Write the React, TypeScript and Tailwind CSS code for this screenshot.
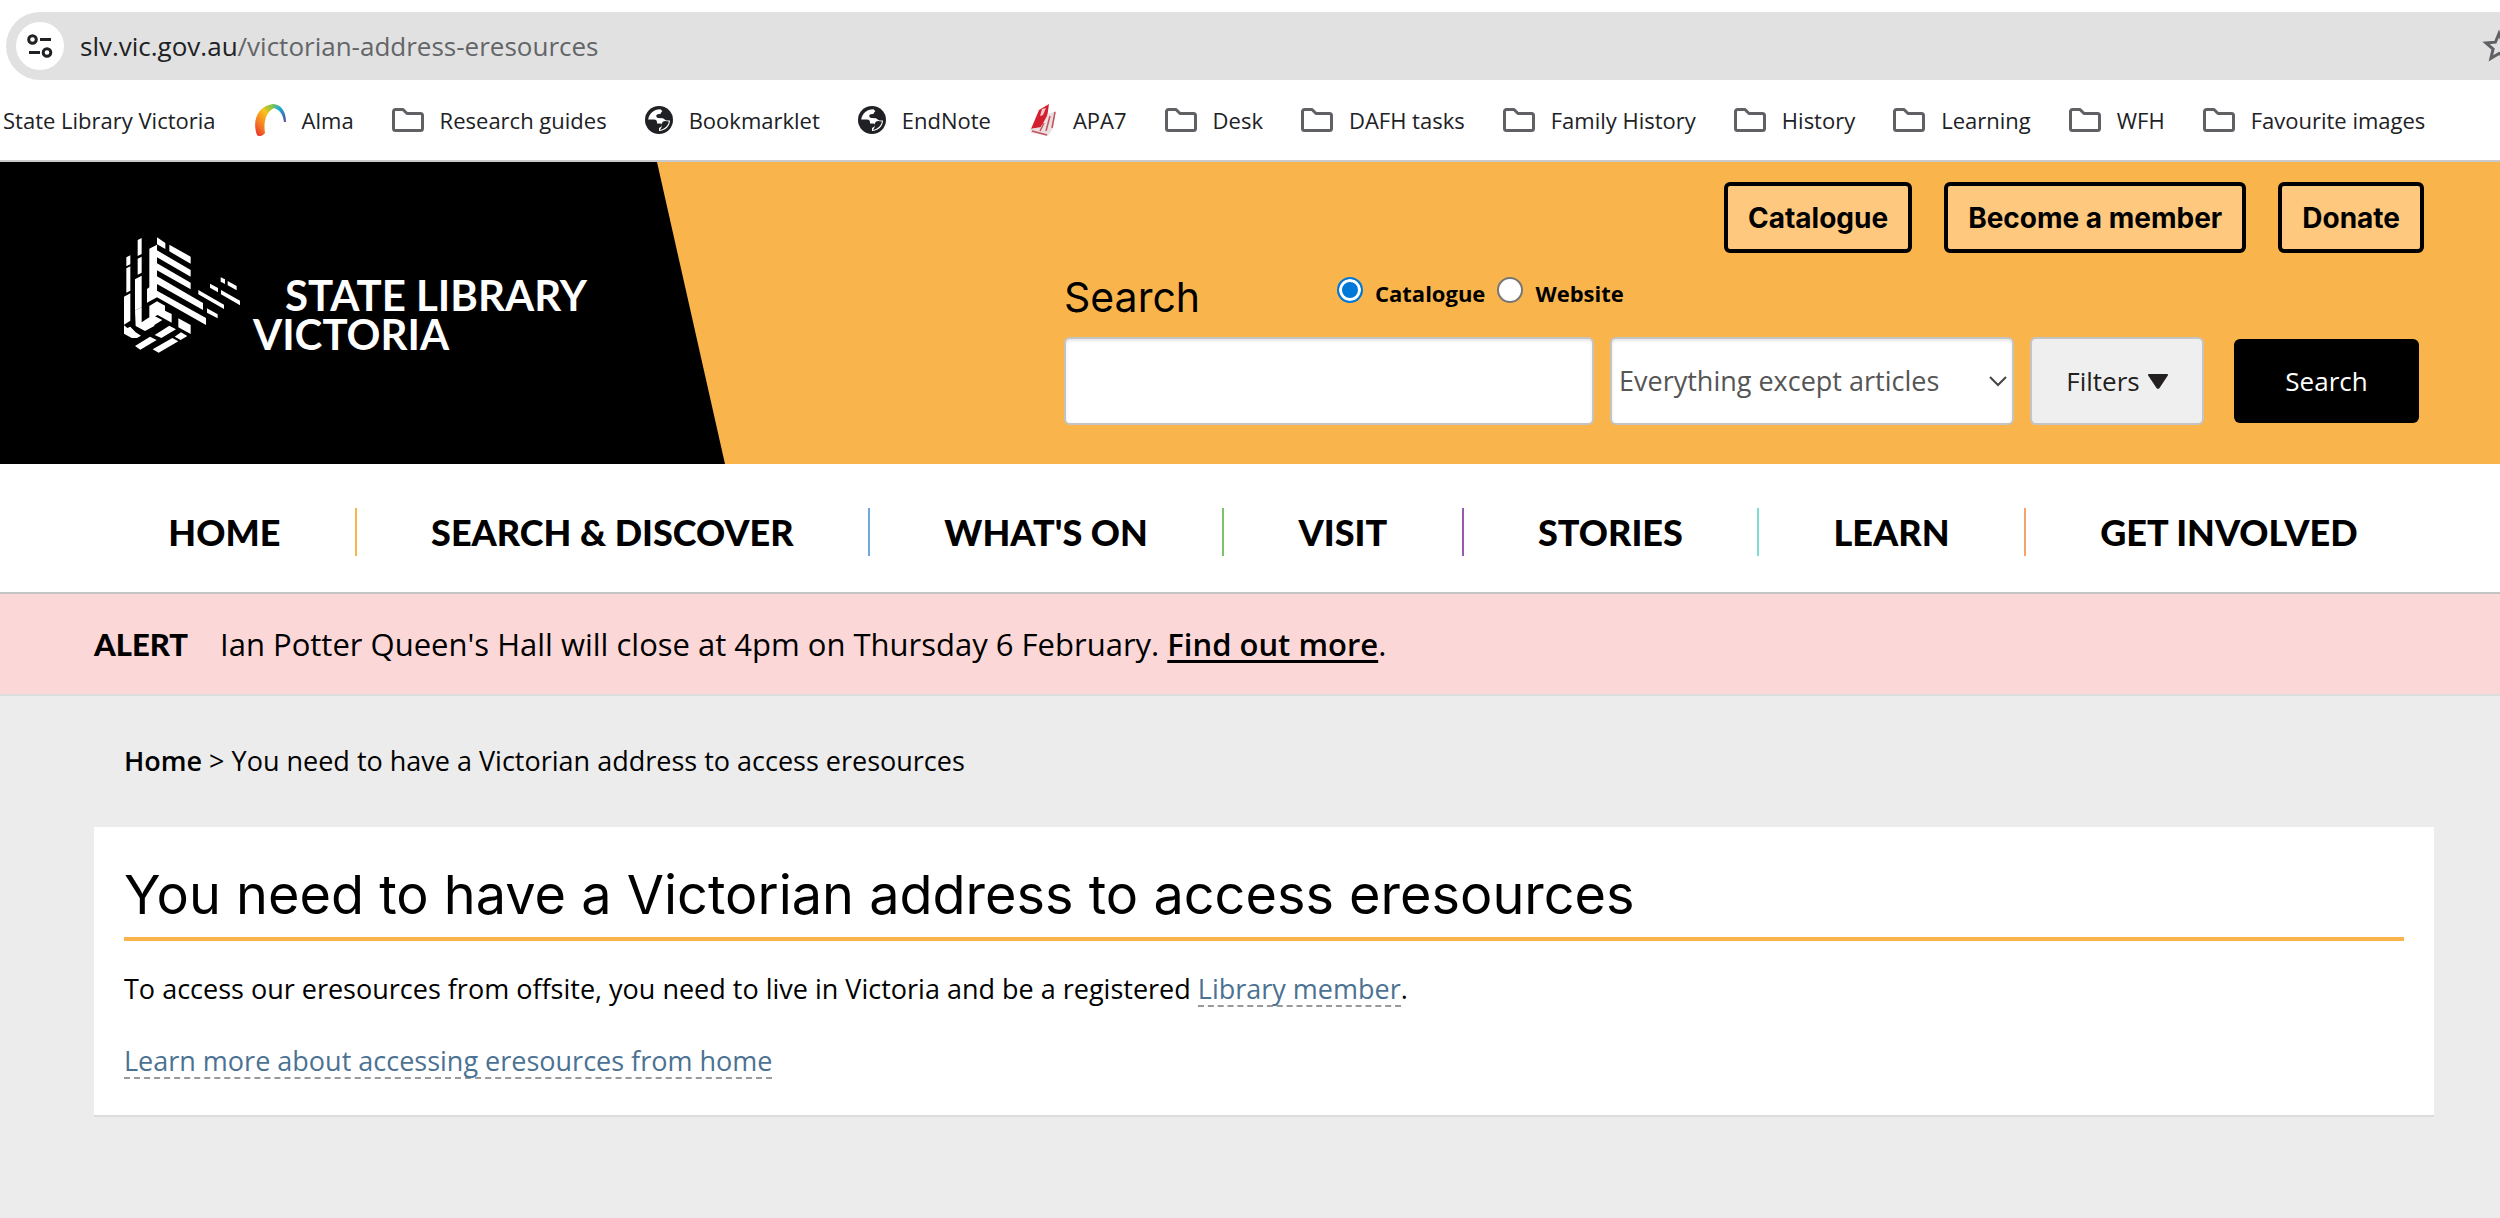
import React, { useState } from 'react';

type IconKind = 'alma' | 'folder' | 'globe' | 'apa';

interface Bookmark {
  label: string;
  icon?: IconKind;
}

const bookmarks: Bookmark[] = [
  { label: 'State Library Victoria' },
  { label: 'Alma', icon: 'alma' },
  { label: 'Research guides', icon: 'folder' },
  { label: 'Bookmarklet', icon: 'globe' },
  { label: 'EndNote', icon: 'globe' },
  { label: 'APA7', icon: 'apa' },
  { label: 'Desk', icon: 'folder' },
  { label: 'DAFH tasks', icon: 'folder' },
  { label: 'Family History', icon: 'folder' },
  { label: 'History', icon: 'folder' },
  { label: 'Learning', icon: 'folder' },
  { label: 'WFH', icon: 'folder' },
  { label: 'Favourite images', icon: 'folder' },
];

const navItems = [
  { label: 'HOME', border: 'border-[#f9b54c]' },
  { label: 'SEARCH & DISCOVER', border: 'border-[#6fa8dc]' },
  { label: "WHAT'S ON", border: 'border-[#7cc36a]' },
  { label: 'VISIT', border: 'border-[#9b59b0]' },
  { label: 'STORIES', border: 'border-[#7fdcd0]' },
  { label: 'LEARN', border: 'border-[#f5a26b]' },
  { label: 'GET INVOLVED', border: 'border-transparent' },
];

const FolderIcon = () => (
  <svg width="32" height="24" viewBox="0 0 32 24" fill="none" stroke="#5f6164" strokeWidth="3" strokeLinejoin="round">
    <path d="M1.5 3.5a2 2 0 0 1 2-2H11l4 4h13.500a2 2 0 0 1 2 2V20.500a2 2 0 0 1-2 2h-25a2 2 0 0 1-2-2z" />
  </svg>
);

const GlobeIcon = () => (
  <svg width="28" height="28" viewBox="0 0 28 28">
    <circle cx="14" cy="14" r="14" fill="#202124" />
    <path
      d="M15.500 3.200 C9 3 4 7.500 3.200 13.500 L9 13.500 C11 13.500 12 14.800 12 16.500 L12 17.500 L15 17.500 C17 17.500 17.500 19 16.500 20.500 L14 22 L14 25 C20 24.800 24.800 20.500 25 14.500 L22 14.500 C20 14.500 19.500 13 18 12.300 L13.500 12 C11 11.800 10.500 9 12.500 8.200 L15 8 C16.500 8 16 6 17.500 5.200 Z"
      fill="#fff"
    />
    <path
      d="M17 5.500 C16 7.500 15.500 8.500 13.500 9 C12 9.400 12.200 11 13.800 11 L18.500 11.200 C20 11.800 20.500 13 22.500 13.200 L26 13 C25 8 22 5 17 5.500 Z M16.500 18.500 C18 20 16 22 15 24 C20 23 23.500 19.500 23.800 15.600 L20 15 C18.500 15 17 16 16.500 18.500 Z"
      fill="#202124"
    />
  </svg>
);

const AlmaIcon = () => (
  <svg width="32" height="32" viewBox="0 0 32 32" fill="none">
    <defs>
      <linearGradient id="alma-warm" x1="0" y1="1" x2="0.700" y2="0">
        <stop offset="0" stopColor="#e8202c" />
        <stop offset="0.350" stopColor="#f47a24" />
        <stop offset="0.750" stopColor="#fbc21a" />
        <stop offset="1" stopColor="#8cc63f" />
      </linearGradient>
      <linearGradient id="alma-cool" x1="0" y1="0" x2="1" y2="1">
        <stop offset="0" stopColor="#8cc63f" />
        <stop offset="0.400" stopColor="#17a9d8" />
        <stop offset="1" stopColor="#5b4a9b" />
      </linearGradient>
    </defs>
    <path d="M3 31 C-2 18 3 2 19 0 L20 4 C13 7 9 17 11 29 C9 32 5 33 3 31 Z" fill="url(#alma-warm)" />
    <path d="M18 0 C27 0 32 7 32 18 L30 18 C29 11 26 5 19 4 Z" fill="url(#alma-cool)" />
  </svg>
);

const ApaIcon = () => (
  <svg width="28" height="32" viewBox="0 0 28 32">
    <path d="M10 6 L20 0 L18 14 L11 24 L2 25 Z" fill="#d3202f" />
    <path d="M13 5 L17 4 L14 11 L11 12 Z" fill="#f6c9cc" />
    <path d="M19 10 L27 7 L24 24 L19 32 L2 29 L1 25 L12 23 Z" fill="#ecdfe0" />
    <path d="M26 8 L23 24 M21 12 L17 27 M3 27 L18 31 M15 19 L11 27" stroke="#c0545f" strokeWidth="1.500" fill="none" />
  </svg>
);

const BookmarkIcon: React.FC<{ kind: IconKind }> = ({ kind }) => {
  if (kind === 'folder') return <FolderIcon />;
  if (kind === 'globe') return <GlobeIcon />;
  if (kind === 'alma') return <AlmaIcon />;
  return <ApaIcon />;
};

const BrowserBar = () => (
  <div className="overflow-hidden border-b-2 border-[#c8cacc] bg-white pt-3 font-['Open_Sans',sans-serif] text-[#202124]">
    <div className="ml-[6px] flex h-[68px] items-center rounded-l-full bg-[#e1e1e1] pl-[10px]">
      <button aria-label="Site information" className="flex size-12 items-center justify-center rounded-full bg-white">
        <svg width="26" height="24" viewBox="0 0 26 24" fill="none" stroke="#202124" strokeWidth="3">
          <circle cx="5.500" cy="5.500" r="3.800" />
          <path d="M13 5.500h11M2 18.500h11" />
          <circle cx="20" cy="18.500" r="3.800" />
        </svg>
      </button>
      <p className="ml-4 flex-1 text-[26px] leading-8">
        slv.vic.gov.au<span className="text-[#636568]">/victorian-address-eresources</span>
      </p>
      <button aria-label="Bookmark this page" className="-mr-4 shrink-0">
        <svg width="34" height="34" viewBox="0 0 34 34" fill="none" stroke="#5f6164" strokeWidth="3">
          <path d="M17 4.500l3.600 8.700 9.400.8-7.100 6.100 2.200 9.200-8.100-4.900-8.100 4.900 2.200-9.200L4 14l9.400-.8z" />
        </svg>
      </button>
    </div>
    <nav className="flex h-20 items-center gap-[38px] pl-[3px] text-[22px] whitespace-nowrap">
      {bookmarks.map((b) => (
        <a key={b.label} href="#" className="flex shrink-0 items-center gap-4">
          {b.icon && <BookmarkIcon kind={b.icon} />}
          {b.label}
        </a>
      ))}
    </nav>
  </div>
);

const LogoMark = () => (
  <svg width="116" height="116" viewBox="27 19 348 348" fill="#fff">
    {/* left tower */}
    <path d="M68 28L80 22V70L68 76ZM34 80L46 74V101L34 107ZM68 84L80 78V126L68 132ZM34 113L46 107V180L34 186ZM60 146L80 135V230L60 240ZM27 198L46 188V270L27 282Z" />
    {/* facade */}
    <path d="M126 20L151 37V55L126 41ZM163 42L227 78V99L163 62Z" />
    <path d="M103 54L126 42V59L227 118V138L126 80V98L227 156V176L126 119V137L264 217V238L126 160V180L273 262V283L126 200L96 216V175L103 170Z" />
    {/* fragments on the right */}
    <path d="M250 178L327 222V235L250 191ZM285 159L309 172V185L285 171ZM317 140L330 146V160L317 153ZM338 151L365 166V179L338 164ZM318 178L375 210V224L318 191ZM276 233L308 251V263L276 246Z" />
    {/* base */}
    <path d="M126 212L150 225V240L170 250V276L128 253L120 257L142 268L118 283V286L90 301L62 286L60 240L80 230V275L103 260V226Z" />
    <path d="M190 263L227 283V310L190 290ZM27 284L37 292L46 288L62 305L78 315L66 322H50L27 309ZM163 285L183 296L139 322L119 313ZM105 318L125 328L76 357L60 346ZM198 305L217 316L197 328L179 318ZM172 322L190 332L131 366L113 356Z" />
  </svg>
);

const headerLinks = ['Catalogue', 'Become a member', 'Donate'];

const Header = () => {
  const [scope, setScope] = useState('Catalogue');

  return (
    <header className="flex h-[302px] bg-[#f9b54c]">
      <div className="flex w-[725px] shrink-0 bg-black pt-[75px] pl-[124px] [clip-path:polygon(0_0,657px_0,100%_100%,0_100%)]">
        <a href="#" className="flex items-start gap-[13px] font-['Lato',sans-serif] text-[42px] leading-[39px] font-bold text-white">
          <LogoMark />
          <span className="block pt-[39px] indent-8">
            STATE LIBRARY
            <br />
            VICTORIA
          </span>
        </a>
      </div>

      <div className="flex flex-1 flex-col items-end pt-5 pr-[76px]">
        <div className="flex gap-8 font-['Inter',sans-serif] text-[28px] leading-8 font-bold">
          {headerLinks.map((label) => (
            <a key={label} href="#" className="flex h-[71px] items-center rounded-md border-4 border-black bg-[#fec87e] px-5">
              {label}
            </a>
          ))}
        </div>

        <form className="mt-4 mr-[5px] w-[1355px]" onSubmit={(e) => e.preventDefault()}>
          <div className="flex h-[68px] items-start">
            <h2 className="w-[273px] pt-1 font-['Inter',sans-serif] text-[41px] leading-[48px]">Search</h2>
            <div className="flex gap-3 pt-2 font-['Open_Sans',sans-serif] text-[22px] leading-8 font-bold">
              {['Catalogue', 'Website'].map((name) => (
                <label key={name} className="flex items-start gap-3">
                  <input
                    type="radio"
                    name="scope"
                    checked={scope === name}
                    onChange={() => setScope(name)}
                    className="size-[26px] appearance-none rounded-full border-2 border-[#767676] bg-white checked:border-[#0078d7] checked:bg-[#0078d7] checked:shadow-[inset_0_0_0_3px_#fff]"
                  />
                  <span>{name}</span>
                </label>
              ))}
            </div>
          </div>
          <div className="flex items-center font-['Open_Sans',sans-serif] text-[27px]">
            <input
              type="text"
              aria-label="Search"
              className="h-[88px] min-w-0 flex-1 rounded-md border-2 border-[#c4c4c4] bg-white px-4 shadow-[inset_0_2px_3px_rgba(0,0,0,0.1)]"
            />
            <div className="relative ml-4">
              <select
                aria-label="Search in"
                className="h-[88px] w-[404px] appearance-none rounded-md border-2 border-[#c4c4c4] bg-white pl-[7px] text-[#555] shadow-[inset_0_2px_3px_rgba(0,0,0,0.1)]"
              >
                <option>Everything except articles</option>
              </select>
              <svg
                className="pointer-events-none absolute top-[39px] right-[7px]"
                width="18"
                height="11"
                viewBox="0 0 18 11"
                fill="none"
                stroke="#444"
                strokeWidth="2"
              >
                <path d="M1 1l8 8 8-8" />
              </svg>
            </div>
            <button type="button" className="ml-4 flex h-[88px] w-[174px] items-center justify-center gap-2 rounded-md border-2 border-[#c4c4c4] bg-[#efefef] text-[26px] text-[#231f20]">
              Filters
              <svg width="20" height="15" viewBox="0 0 20 15" fill="#231f20">
                <path d="M1 0h18a1 1 0 0 1 .8 1.500L11.500 14a2 2 0 0 1-3 0L.2 1.500A1 1 0 0 1 1 0z" />
              </svg>
            </button>
            <button type="submit" className="ml-[30px] h-[84px] w-[185px] rounded-md bg-black text-[26px] text-white">
              Search
            </button>
          </div>
        </form>
      </div>
    </header>
  );
};

const MainNav = () => (
  <nav className="flex h-[130px] items-center border-b-2 border-[#c4c4c4] bg-white pt-2 pr-[66px] pl-[94px] font-['Lato',sans-serif] text-[36px] font-black whitespace-nowrap">
    {navItems.map((item) => (
      <a key={item.label} href="#" className={`flex h-12 flex-auto items-center justify-center border-r-2 ${item.border}`}>
        {item.label}
      </a>
    ))}
  </nav>
);

const AlertBar = () => (
  <div className="flex h-[102px] items-center gap-8 border-b-2 border-[#ddd] bg-[#fbd7d7] pl-[94px]">
    <strong className="font-['Lato',sans-serif] text-[31px] font-black">ALERT</strong>
    <p className="font-['Open_Sans',sans-serif] text-[31px]">
      Ian Potter Queen's Hall will close at 4pm on Thursday 6 February.{' '}
      <a href="#" className="font-semibold underline decoration-[3px] underline-offset-4">
        Find out more
      </a>
      .
    </p>
  </div>
);

const App: React.FC = () => {
  return (
    <div className="flex min-h-screen flex-col bg-[#ececec] text-black">
      <BrowserBar />
      <Header />
      <MainNav />
      <AlertBar />
      <main className="pr-[66px] pl-[94px] font-['Open_Sans',sans-serif] text-[27px] leading-10">
        <p className="mt-[45px] pl-[30px]">
          <a href="#" className="font-semibold">
            Home
          </a>{' '}
          &gt; You need to have a Victorian address to access eresources
        </p>
        <article className="mt-[46px] border-b-2 border-[#dcdcdc] bg-white px-[30px] pt-[37px] pb-[34px]">
          <h1 className="border-b-4 border-[#f9b54c] pb-[11px] font-['Inter',sans-serif] text-[54px] leading-[62px]">
            You need to have a Victorian address to access eresources
          </h1>
          <p className="mt-7">
            To access our eresources from offsite, you need to live in Victoria and be a registered{' '}
            <a href="#" className="inline-block border-b-2 border-dashed border-[#999] leading-8 text-[#4b7293]">
              Library member
            </a>
            .
          </p>
          <p className="mt-8">
            <a href="#" className="inline-block border-b-2 border-dashed border-[#999] leading-8 text-[#4b7293]">
              Learn more about accessing eresources from home
            </a>
          </p>
        </article>
      </main>
    </div>
  );
};

export default App;
